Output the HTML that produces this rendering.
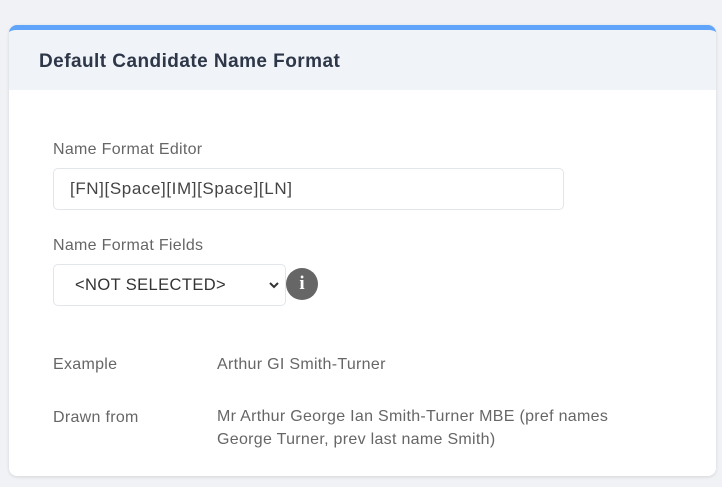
<!DOCTYPE html>
<html><head><style>
body{margin:0;background:#f0f2f5;width:722px;height:487px;overflow:hidden;font-family:"Liberation Sans",sans-serif;}
.card{position:absolute;left:9px;top:25px;width:707px;height:451px;background:#fff;border-radius:8px;border-top:5px solid #60a5fa;box-shadow:0 1px 3px rgba(0,0,0,.12);overflow:hidden;box-sizing:border-box;}
.hdr{height:60px;background:#f0f3f8;}
.hdr h2{margin:0;position:absolute;left:30px;top:21px;font-size:19px;letter-spacing:0.45px;font-weight:bold;color:#2d3748;}
.lbl{position:absolute;font-size:16px;letter-spacing:0.3px;color:#666;}
.inp{position:absolute;left:44px;top:138px;width:511px;height:42px;border:1px solid #e2e5ea;border-radius:5px;box-sizing:border-box;font-size:17px;letter-spacing:0.6px;color:#444;padding:10px 0 0 16px;}
.sel{position:absolute;left:44px;top:234px;width:233px;height:42px;border:1px solid #e2e5ea;border-radius:5px;box-sizing:border-box;font-size:16.5px;letter-spacing:0.4px;color:#333;padding:11px 0 0 21px;}
.info{position:absolute;left:277px;top:238px;width:32px;height:32px;border-radius:50%;background:#666;color:#fff;font-weight:bold;font-size:19px;text-align:center;line-height:32px;font-family:"Liberation Serif",serif;}
</style></head><body>
<div class="card">
<div class="hdr"><h2>Default Candidate Name Format</h2></div>
<div class="lbl" style="left:44px;top:111px">Name Format Editor</div>
<div class="inp">[FN][Space][IM][Space][LN]</div>
<div class="lbl" style="left:44px;top:207px">Name Format Fields</div>
<div class="sel">&lt;NOT SELECTED&gt;
<svg style="position:absolute;right:5px;top:15px" width="12" height="10" viewBox="0 0 12 10"><path d="M2 3l4 4 4-4" stroke="#333" stroke-width="2" fill="none"/></svg></div>
<div class="info">i</div>
<div class="lbl" style="left:44px;top:326px">Example</div>
<div class="lbl" style="left:208px;top:326px">Arthur GI Smith-Turner</div>
<div class="lbl" style="left:44px;top:379px">Drawn from</div>
<div class="lbl" style="left:208px;top:379px;line-height:23px;margin-top:-4px;width:480px">Mr Arthur George Ian Smith-Turner MBE (pref names<br>George Turner, prev last name Smith)</div>
</div>
</body></html>
